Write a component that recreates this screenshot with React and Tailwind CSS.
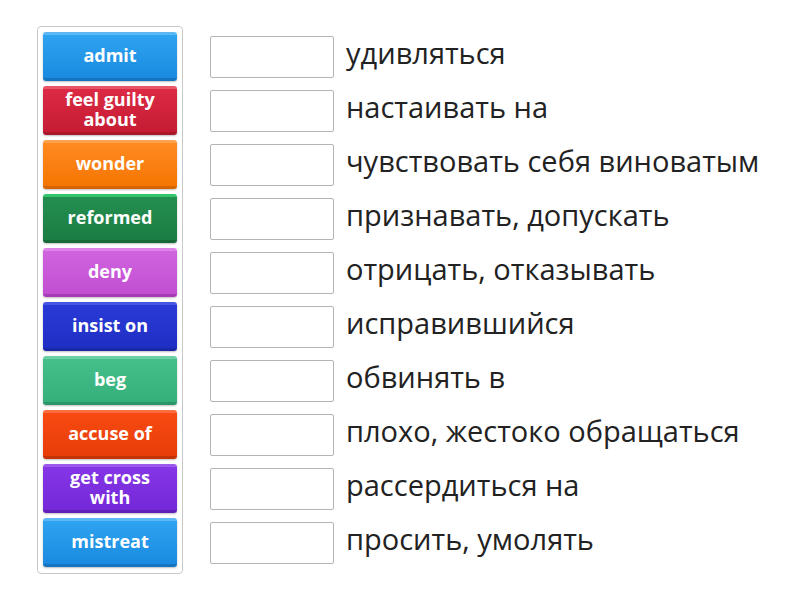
const tiles = [
  { t: "admit", c: "bg-gradient-to-b from-[#2ea3f0] to-[#1a8be0] border-t-[#5cb8f5] border-b-[#1474c0]" },
  { t: "feel guilty about", c: "bg-gradient-to-b from-[#dc2a44] to-[#c51c33] border-t-[#e85468] border-b-[#a8172a]" },
  { t: "wonder", c: "bg-gradient-to-b from-[#ff8a1f] to-[#f57600] border-t-[#ffa24d] border-b-[#d66500]" },
  { t: "reformed", c: "bg-gradient-to-b from-[#238f4f] to-[#1b7d43] border-t-[#34c46c] border-b-[#166a38]" },
  { t: "deny", c: "bg-gradient-to-b from-[#d063de] to-[#c24fd2] border-t-[#dd84e8] border-b-[#a83cb8]" },
  { t: "insist on", c: "bg-gradient-to-b from-[#2a3ad6] to-[#1f2fc4] border-t-[#4756e0] border-b-[#1a27a6]" },
  { t: "beg", c: "bg-gradient-to-b from-[#45c08a] to-[#36b07a] border-t-[#6cd0a4] border-b-[#2a9566]" },
  { t: "accuse of", c: "bg-gradient-to-b from-[#f84a12] to-[#e83d08] border-t-[#fb6d3f] border-b-[#c43306]" },
  { t: "get cross with", c: "bg-gradient-to-b from-[#8536e6] to-[#7428d8] border-t-[#9c5aed] border-b-[#5f1fb8]" },
  { t: "mistreat", c: "bg-gradient-to-b from-[#2ea3f0] to-[#1a8be0] border-t-[#5cb8f5] border-b-[#1474c0]" },
];

const words = [
  "удивляться",
  "настаивать на",
  "чувствовать себя виноватым",
  "признавать, допускать",
  "отрицать, отказывать",
  "исправившийся",
  "обвинять в",
  "плохо, жестоко обращаться",
  "рассердиться на",
  "просить, умолять",
];

export default function App() {
  return (
    <div className="w-[800px] h-[600px] bg-white flex pl-[37px] pt-[26px]" style={{ fontFamily: '"Open Sans", sans-serif' }}>
      <div className="w-[146px] h-[548px] border border-[#c8c8c8] rounded-[4px] p-[5px] flex flex-col gap-[5px]">
        {tiles.map((x) => (
          <div
            key={x.t}
            className={`h-[49px] rounded-[3px] border-t-[3px] border-b-[3px] border-x-0 flex items-center justify-center text-center text-white font-bold text-[18px] leading-[20px] px-2 pb-[3px] shadow-[0_1px_2px_rgba(0,0,0,0.25)] ${x.c}`}
          >
            {x.t}
          </div>
        ))}
      </div>
      <div className="ml-[27px] pt-[6px] flex flex-col gap-[5px]">
        {words.map((w) => (
          <div key={w} className="h-[49px] flex items-center">
            <div className="w-[124px] h-[42px] border border-[#b4b4b4] rounded-[2px] bg-white" />
            <div className="ml-[12px] mb-[8px] text-[29px] text-[#222] leading-none whitespace-nowrap">{w}</div>
          </div>
        ))}
      </div>
    </div>
  );
}
